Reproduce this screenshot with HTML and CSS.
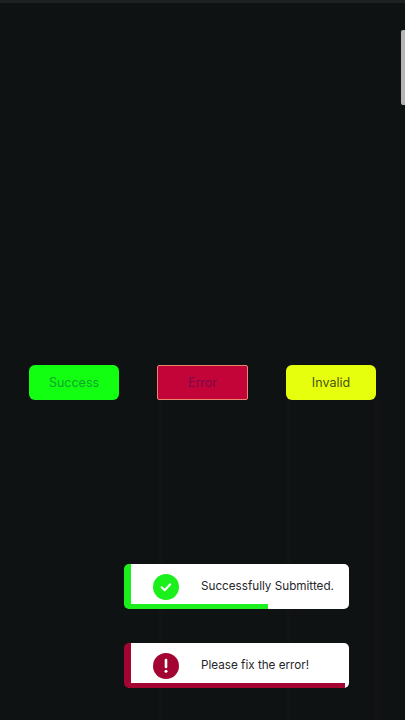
FILE: index.html

```html
<!DOCTYPE html>
<html>
<head>
	<meta charset="UTF-8">
	<title>Toast notifications</title>
	<link rel="stylesheet" href="styles.css">
</head>
<body>

<div class="topBar"></div>
<div class="scrollThumb"></div>

<section class="btnRow">
	<button class="btn success">Success</button>
	<button class="btn error">Error</button>
	<button class="btn invalid">Invalid</button>
</section>

<!-- faint column trails under the buttons -->
<div class="trails">
	<span></span>
	<span></span>
	<span></span>
</div>

<!-- toasts -->
<div class="toastBox">
	<div class="toast toastOk">
		<div class="toastIcon">
			<svg width="14" height="14" viewBox="0 0 14 14">
				<path d="M2.6 7.3 L5.7 10.2 L11.2 4.2" fill="none" stroke="#fff" stroke-width="2" stroke-linecap="round" stroke-linejoin="round"/>
			</svg>
		</div>
		<p class="toastText">Successfully Submitted.</p>
		<div class="progress"></div>
	</div>
	<div class="toast toastErr">
		<div class="toastIcon">
			<svg width="14" height="18" viewBox="0 0 14 18">
				<path d="M7 3 V10" fill="none" stroke="#fff" stroke-width="2.6" stroke-linecap="round"/>
				<circle cx="7" cy="14.2" r="1.5" fill="#fff"/>
			</svg>
		</div>
		<p class="toastText">Please fix the error!</p>
		<div class="progress"></div>
	</div>
</div>

</body>
</html>
```

FILE: styles.css

```css
html,
body {
	margin: 0;
	height: 100%;
}
body {
	background: #0f1213;
	font-family: "Inter", "Liberation Sans", sans-serif;
	overflow: hidden;
}
p {
	margin: 0;
}
.topBar {
	height: 3px;
	background: #1d2123;
}
.scrollThumb {
	position: absolute;
	top: 30px;
	right: 0;
	width: 4px;
	height: 75px;
	background: #b4b4b4;
	border-radius: 2px 0 0 2px;
}
.btnRow {
	display: flex;
	justify-content: space-between;
	margin-top: 362px;
	padding: 0 29px;
}
.btn {
	width: 90px;
	height: 35px;
	padding: 0;
	border: none;
	border-radius: 6px;
	font-family: inherit;
	font-size: 12.5px;
}
.success {
	background: #12ff12;
	color: #10a52c;
}
.error {
	width: 91px;
	background: #c20438;
	border: 1px solid #e8866e;
	border-radius: 2px;
	color: #7a0a4a;
}
.invalid {
	background: #e6ff0c;
	color: #4a5214;
}
.trails {
	display: flex;
	height: 320px;
	margin-left: 158px;
}
.trails span {
	width: 123px;
	border-left: 5px solid #131314;
}
.trails span:nth-child(2) {
	width: 84px;
}
.trails span:last-child {
	width: 0;
}
.toastBox {
	position: absolute;
	top: 564px;
	left: 124px;
	display: flex;
	flex-direction: column;
	gap: 34px;
	width: 225px;
}
.toast {
	position: relative;
	display: flex;
	align-items: center;
	box-sizing: border-box;
	height: 45px;
	padding-left: 22px;
	background: #fff;
	border-left: 7px solid;
	border-radius: 5px;
	overflow: hidden;
}
.toastIcon {
	display: flex;
	align-items: center;
	justify-content: center;
	flex: none;
	width: 26px;
	height: 26px;
	margin-right: 22px;
	border-radius: 50%;
	color: #fff;
}
.toastText {
	padding-bottom: 2px;
	font-size: 11.7px;
	color: #26262a;
	white-space: nowrap;
}
.progress {
	position: absolute;
	left: 0;
	bottom: 0;
	height: 5px;
}
.toastOk {
	border-color: #1cf01c;
}
.toastOk .toastIcon,
.toastOk .progress {
	background: #1cf01c;
}
.toastOk .progress {
	width: 137px;
}
.toastErr {
	border-color: #a30432;
}
.toastErr .toastIcon,
.toastErr .progress {
	background: #a30432;
}
.toastErr .progress {
	width: 214px;
}
```
